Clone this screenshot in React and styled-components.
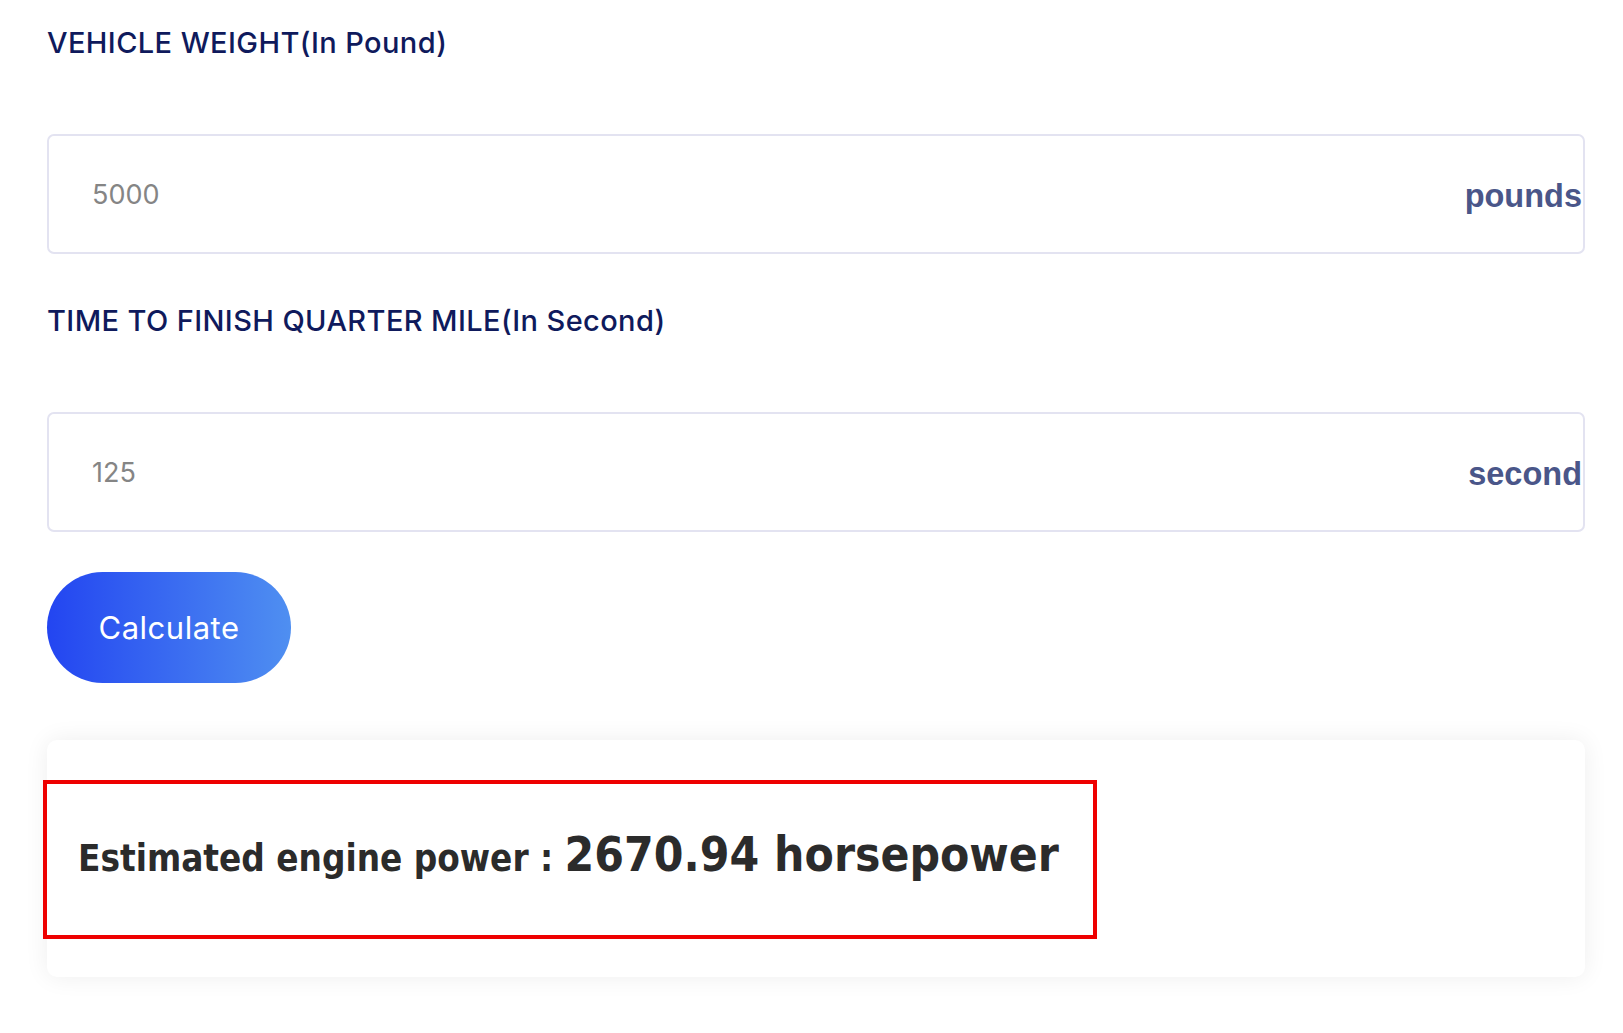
import React from 'react';
import styled, { createGlobalStyle } from 'styled-components';

const GlobalStyle = createGlobalStyle`
  html, body {
    margin:0;
    padding:0;
    background:#fff;
  }
  * { box-sizing:border-box; }
`;

const S = {
  Wrapper: styled.div`
    padding:22px 38px 40px 47px;
    font-family:Inter, "Noto Sans", sans-serif;
  `,
  Label: styled.label`
    display:block;
    color:#0f1a5c;
    font-size:29px;
    font-weight:500;
    letter-spacing:0.4px;
    line-height:42px;
    margin-bottom:70px;
  `,
  Field: styled.div`
    display:flex;
    align-items:center;
    height:120px;
    border:2px solid #e3e3f1;
    border-radius:7px;
    margin-bottom:${(p) => p.$gap}px;
  `,
  Input: styled.input`
    flex:1;
    height:100%;
    border:none;
    outline:none;
    background:transparent;
    padding:0 0 0 43px;
    font-family:Inter, "Noto Sans", sans-serif;
    font-size:27px;
    color:#333;
    &::placeholder { color:#858585; }
  `,
  Unit: styled.span`
    font-family:"Liberation Sans", Arial, sans-serif;
    font-weight:700;
    font-size:32.5px;
    color:#4a5689;
    margin-right:1px;
    padding-top:4px;
  `,
  Button: styled.button`
    display:block;
    width:244px;
    height:111px;
    border:none;
    border-radius:56px;
    background:linear-gradient(90deg, #2345f1 0%, #4f8ff1 100%);
    color:#fff;
    font-family:Inter, "Noto Sans", sans-serif;
    font-size:31px;
    font-weight:400;
    letter-spacing:0.5px;
    cursor:pointer;
    margin-bottom:57px;
  `,
  Card: styled.div`
    background:#fff;
    border-radius:10px;
    box-shadow:0 0 24px rgba(0,0,0,0.07);
    padding:40px 0 38px 0;
  `,
  Result: styled.div`
    display:flex;
    align-items:center;
    margin-left:-4px;
    width:1054px;
    height:159px;
    border:4px solid #ee0000;
    padding:0 0 10px 31px;
    font-family:"DejaVu Sans Condensed", "DejaVu Sans", sans-serif;
    font-weight:700;
    color:#2b2b2b;
  `,
  Line: styled.p`
    margin:0;
    white-space:nowrap;
    font-size:36.5px;
  `,
  Value: styled.span`
    font-size:47.5px;
  `,
};

const fields = [
  { label: 'VEHICLE WEIGHT(In Pound)', placeholder: '5000', unit: 'pounds', gap: 46 },
  { label: 'TIME TO FINISH QUARTER MILE(In Second)', placeholder: '125', unit: 'second', gap: 40 },
];

const App = () => (
  <>
    <GlobalStyle />
    <S.Wrapper>
      {fields.map((f) => (
        <React.Fragment key={f.label}>
          <S.Label>{f.label}</S.Label>
          <S.Field $gap={f.gap}>
            <S.Input type="number" placeholder={f.placeholder} />
            <S.Unit>{f.unit}</S.Unit>
          </S.Field>
        </React.Fragment>
      ))}
      <S.Button>Calculate</S.Button>
      <S.Card>
        <S.Result>
          <S.Line>
            Estimated engine power : <S.Value>2670.94 horsepower</S.Value>
          </S.Line>
        </S.Result>
      </S.Card>
    </S.Wrapper>
  </>
);

export default App;
